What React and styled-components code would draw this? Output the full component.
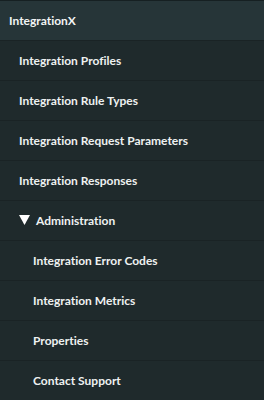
import styled, { createGlobalStyle } from "styled-components";

const GlobalStyle = createGlobalStyle`
    html, body {
        margin: 0;
        padding: 0;
        background: #1f2a2c;
    }
    body {
        font-family: "Lato", "Liberation Sans", sans-serif;
        font-variant-ligatures: none;
    }
`

const Sidebar = styled.nav`
    width: 264px;
    height: 400px;
    background: #1f2a2c;
    border-top: 1px solid #162022;
    box-sizing: border-box;
    overflow: hidden;
`
const Header = styled.div`
    height: 39px;
    display: flex;
    align-items: center;
    padding-left: 9px;
    background: #263538;
    color: #f2f4f4;
    font-size: 12px;
    font-weight: 700;
`
const Item = styled.div`
    height: 40px;
    display: flex;
    align-items: center;
    gap: 6px;
    padding-left: ${({ $level }) => ($level === 2 ? 33 : 19)}px;
    border-top: 1px solid #1a2325;
    box-sizing: border-box;
    color: #eef1f1;
    font-size: 12px;
    font-weight: 700;
    padding-bottom: 1px;
`
const Caret = styled.svg`
    width: 11px;
    height: 10px;
    flex: none;
`

const items = [
    { label: "Integration Profiles" },
    { label: "Integration Rule Types" },
    { label: "Integration Request Parameters" },
    { label: "Integration Responses" },
    { label: "Administration", group: true },
    { label: "Integration Error Codes", level: 2 },
    { label: "Integration Metrics", level: 2 },
    { label: "Properties", level: 2 },
    { label: "Contact Support", level: 2 },
]

const App = () => {
    return (
        <>
        <GlobalStyle />
        <Sidebar>
            <Header>IntegrationX</Header>
            {items.map((item) => (
                <Item key={item.label} $level={item.level}>
                    {item.group && (
                        <Caret viewBox="0 0 11 10">
                            <polygon points="0,0 11,0 5.5,10" fill="#ffffff" />
                        </Caret>
                    )}
                    {item.label}
                </Item>
            ))}
        </Sidebar>
        </>
    )
}

export default App
